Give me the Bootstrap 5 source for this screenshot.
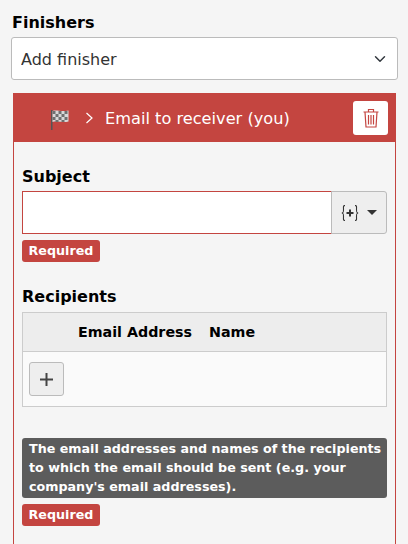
<!DOCTYPE html>
<html lang="en">
<head>
    <meta charset="UTF-8">
    <meta name="viewport" content="width=device-width, initial-scale=1.0">
    <link href="https://cdn.jsdelivr.net/npm/bootstrap@5.3.2/dist/css/bootstrap.min.css" rel="stylesheet">
    <script src="https://cdn.jsdelivr.net/npm/bootstrap@5.3.2/dist/js/bootstrap.bundle.min.js"></script>
    <title>Finishers</title>
    <style>
        html, body { height: 544px; overflow: hidden; }
        body { background: #f5f5f5; font-family: "DejaVu Sans", Verdana, sans-serif; font-size: 14.25px; color: #000; padding: 14px 10px 0 11px; }
        .fin-label { font-weight: 700; font-size: 16px; line-height: 17px; margin: 0 0 6px 1px; color: #000; }
        .fin-select { height: 43px; border-color: #bbb; border-radius: 3px; font-size: 16px; color: #333; padding: 2px 9px 0; background-position: right 9px center; }
        .fin-panel { margin: 13px 2px 0 2px; height: 451px; border: 1px solid #c44540; border-width: 0 1px; padding: 0 8px; }
        .fin-head { height: 49px; margin: 0 -9px; background: #c44540; color: #fff; font-size: 16.2px; padding: 0 8px 0 38px; }
        .fin-flag { width: 18px; height: 21px; margin: 3px 16px 0 0; }
        .fin-chev { width: 9px; height: 12px; margin-right: 11px; }
        .fin-title { padding-top: 3px; }
        .fin-trash { width: 35px; height: 34px; background: #fff; border: 0; border-radius: 3px; padding: 0; }
        .fin-field { margin-top: 25px; }
        .fin-field .fin-label { line-height: 19px; margin: 0 0 5px 0; }
        .fin-input { height: 43px; border: 1px solid #c44540; border-radius: 0 !important; background: #fff; }
        .fin-var { width: 56px; background: #eee; border: 1px solid #bbb; border-radius: 0 3px 3px 0; padding: 0; }
        .fin-caret { width: 0; height: 0; border-left: 5px solid transparent; border-right: 5px solid transparent; border-top: 5px solid #333; }
        .fin-req { display: block; width: 78px; height: 22px; margin-top: 6px; background: #c44540; color: #fff; font-size: 12.7px; font-weight: 700; line-height: 22px; text-align: center; padding: 0; border-radius: 3px; }
        .fin-table { border: 1px solid #ccc; background: #fafafa; margin-top: 6px; }
        .fin-thead { height: 39px; background: #ededed; border-bottom: 1px solid #ccc; font-weight: 700; padding: 1px 0 0 55px; gap: 17px; }
        .fin-tbody { height: 54px; padding: 10px 6px; }
        .fin-add { width: 35px; height: 34px; background: #eee; border: 1px solid #bbb; border-radius: 3px; padding: 0; }
        .fin-help { margin-top: 31px; background: #5c5c5c; color: #fff; font-size: 12.7px; font-weight: 700; line-height: 19px; padding: 1px 4px 1px 7px; height: 60px; border-radius: 3px; }
    </style>
</head>
<body>
    <div class="fin-label">Finishers</div>
    <select class="form-select fin-select">
        <option>Add finisher</option>
    </select>

    <div class="fin-panel">
        <div class="fin-head d-flex align-items-center">
            <svg class="fin-flag" viewBox="0 0 18 21">
                <path d="M0 1h1.500v20H0z" fill="#555"/>
                <path d="M1.500 2c4-1.500 8 1 16-.5v11c-6 1.500-11-1-16 .5z" fill="#d8d8d8"/>
                <path d="M1.500 2h3v3h-3zM7.500 2h3v3h-3zM13.500 2h3v3h-3zM4.500 5h3v3h-3zM10.500 5h3v3h-3zM1.500 8h3v3h-3zM7.500 8h3v3h-3zM13.500 8h3v3h-3zM4.500 11h3v2h-3zM10.500 11h3v2h-3z" fill="#707070"/>
            </svg>
            <svg class="fin-chev" viewBox="0 0 9 12"><path d="M1.500 1l5.500 5-5.500 5" fill="none" stroke="#fff" stroke-width="1.200"/></svg>
            <span class="fin-title flex-grow-1">Email to receiver (you)</span>
            <button class="fin-trash btn d-flex align-items-center justify-content-center" type="button">
                <svg width="16" height="20" viewBox="0 0 16 20" fill="none" stroke="#c44540" stroke-width="1.200">
                    <path d="M.5 4h15M5.500 4V1.500h5V4M2 4l1 15h10l1-15M5.500 7v9.500M8 7v9.500M10.500 7v9.500"/>
                </svg>
            </button>
        </div>

        <div class="fin-field">
            <div class="fin-label">Subject</div>
            <div class="input-group">
                <input class="form-control fin-input" type="text">
                <button class="fin-var btn d-flex align-items-center justify-content-center gap-2" type="button">
                    <svg width="18" height="16" viewBox="0 0 18 16" fill="none" stroke="#333" stroke-width="1.100">
                        <path d="M4 .5C2 .5 2.500 2 2.500 4.500S2.500 8 .8 8c1.700 0 1.700 1 1.700 3.500S2 15.500 4 15.500M14 .5c2 0 1.500 1.500 1.500 4S15.500 8 17.200 8c-1.700 0-1.700 1-1.700 3.500s.5 4-1.500 4"/>
                        <path d="M9 4.500v7M5.500 8h7" stroke-width="2"/>
                    </svg>
                    <span class="fin-caret"></span>
                </button>
            </div>
            <span class="badge fin-req">Required</span>
        </div>

        <div class="fin-field">
            <div class="fin-label">Recipients</div>
            <div class="fin-table">
                <div class="fin-thead d-flex align-items-center"><span>Email Address</span><span>Name</span></div>
                <div class="fin-tbody">
                    <button class="fin-add btn d-flex align-items-center justify-content-center" type="button">
                        <svg width="13" height="13" viewBox="0 0 13 13"><path d="M5.500 0h2v5.500H13v2H7.500V13h-2V7.500H0v-2h5.500z" fill="#444"/></svg>
                    </button>
                </div>
            </div>
            <div class="fin-help">The email addresses and names of the recipients to which the email should be sent (e.g. your company's email addresses).</div>
            <span class="badge fin-req">Required</span>
        </div>
    </div>
</body>
</html>
